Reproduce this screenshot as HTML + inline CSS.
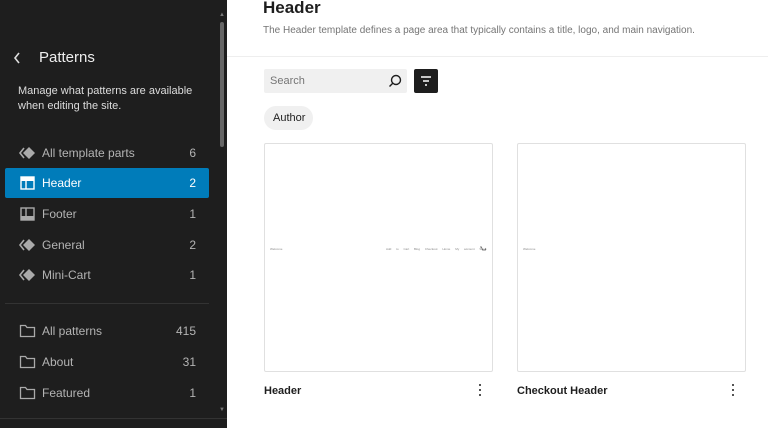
<!DOCTYPE html><html><head><style>
*{margin:0;padding:0;box-sizing:border-box}
body{width:768px;height:428px;overflow:hidden;font-family:"Liberation Sans",sans-serif;background:#fff;position:relative}
.sb{position:absolute;left:0;top:0;width:227px;height:428px;background:#1e1e1e;color:#e0e0e0}
.abs{position:absolute}
.it{position:absolute;left:5px;width:204px;height:30px;font-size:12px;color:#b4b4b4}
.it .l{position:absolute;left:37px;top:8px}
.it .c{position:absolute;right:13px;top:8px}
.it svg{position:absolute;left:13px;top:5px}
.sel{background:#007cba;color:#fff;border-radius:2px}
.main{position:absolute;left:227px;top:0;right:0;height:428px}
.card{position:absolute;top:143px;width:229px;height:229px;border:1px solid #e0e0e0;border-radius:2px}
.lab{position:absolute;top:385px;font-size:11px;font-weight:bold;color:#1e1e1e}
.keb{position:absolute;top:384px;width:3px}
.keb i{display:block;width:2px;height:2px;background:#1e1e1e;margin-bottom:3px;border-radius:1px}
.tiny{position:absolute;font-size:3px;color:#888}
</style></head><body>
<div class="sb">
<div class="abs" style="left:13px;top:51px"><svg width="10" height="14"><path d="M6 2L2 7l4 5" stroke="#ddd" stroke-width="1.6" fill="none"/></svg></div>
<div class="abs" style="left:39px;top:49px;font-size:15px;color:#eee">Patterns</div>
<div class="abs" style="left:18px;top:84px;font-size:11px;line-height:15px;color:#ddd">Manage what patterns are available<br>when editing the site.</div>
<div class="it" style="top:138px"><svg width="20" height="20"><path d="M6 5l-4 5 4 5" stroke="#aaa" stroke-width="1.6" fill="none"/><path d="M11 4l6 6-6 6-6-6z" fill="#aaa"/></svg><span class="l">All template parts</span><span class="c">6</span></div>
<div class="it sel" style="top:168px"><svg width="20" height="20"><rect x="3" y="4" width="13" height="12" fill="none" stroke="#fff" stroke-width="1.4"/><rect x="3" y="4" width="13" height="4" fill="#fff"/><line x1="8" y1="8" x2="8" y2="16" stroke="#fff" stroke-width="1.4"/></svg><span class="l">Header</span><span class="c">2</span></div>
<div class="it" style="top:199px"><svg width="20" height="20"><rect x="3" y="4" width="13" height="12" fill="none" stroke="#aaa" stroke-width="1.4"/><rect x="3" y="12" width="13" height="4" fill="#aaa"/><line x1="8" y1="4" x2="8" y2="12" stroke="#aaa" stroke-width="1.4"/></svg><span class="l">Footer</span><span class="c">1</span></div>
<div class="it" style="top:230px"><svg width="20" height="20"><path d="M6 5l-4 5 4 5" stroke="#aaa" stroke-width="1.6" fill="none"/><path d="M11 4l6 6-6 6-6-6z" fill="#aaa"/></svg><span class="l">General</span><span class="c">2</span></div>
<div class="it" style="top:260px"><svg width="20" height="20"><path d="M6 5l-4 5 4 5" stroke="#aaa" stroke-width="1.6" fill="none"/><path d="M11 4l6 6-6 6-6-6z" fill="#aaa"/></svg><span class="l">Mini-Cart</span><span class="c">1</span></div>
<div class="abs" style="left:5px;top:303px;width:204px;height:1px;background:#333"></div>
<div class="it" style="top:316px"><svg width="20" height="20"><path d="M2.5 4.5h5l1.5 2h7.5v9h-14z" fill="none" stroke="#aaa" stroke-width="1.3"/></svg><span class="l">All patterns</span><span class="c">415</span></div>
<div class="it" style="top:347px"><svg width="20" height="20"><path d="M2.5 4.5h5l1.5 2h7.5v9h-14z" fill="none" stroke="#aaa" stroke-width="1.3"/></svg><span class="l">About</span><span class="c">31</span></div>
<div class="it" style="top:378px"><svg width="20" height="20"><path d="M2.5 4.5h5l1.5 2h7.5v9h-14z" fill="none" stroke="#aaa" stroke-width="1.3"/></svg><span class="l">Featured</span><span class="c">1</span></div>
<div class="abs" style="left:0;top:418px;width:227px;height:10px;background:#1e1e1e;border-top:1px solid #333"></div>
<div class="abs" style="left:220px;top:22px;width:4px;height:125px;background:#666;border-radius:2px"></div>
<div class="abs" style="left:219px;top:12px;font-size:6px;color:#777">▲</div>
<div class="abs" style="left:219px;top:407px;font-size:6px;color:#777">▼</div>
</div>
<div class="main">
<div class="abs" style="left:36px;top:-2px;font-size:17px;font-weight:bold;color:#1e1e1e">Header</div>
<div class="abs" style="left:36px;top:25px;font-size:10px;color:#757575;white-space:nowrap">The Header template defines a page area that typically contains a title, logo, and main navigation.</div>
<div class="abs" style="left:0;top:56px;width:541px;height:1px;background:#eee"></div>
<div class="abs" style="left:37px;top:69px;width:143px;height:24px;background:#f0f0f0;border-radius:2px;font-size:11px;color:#757575;padding:6px 6px">Search</div>
<svg class="abs" style="left:160px;top:73px" width="16" height="16"><circle cx="9" cy="7" r="4.5" fill="none" stroke="#1e1e1e" stroke-width="1.4"/><line x1="6" y1="10" x2="2.5" y2="13.5" stroke="#1e1e1e" stroke-width="1.4"/></svg>
<div class="abs" style="left:187px;top:69px;width:24px;height:24px;background:#1e1e1e;border-radius:2px"><svg width="24" height="24"><path d="M7 8h10M9 12h6M11 16h2" stroke="#fff" stroke-width="1.4"/></svg></div>
<div class="abs" style="left:37px;top:106px;width:49px;height:24px;background:#f0f0f0;border-radius:12px;font-size:11px;color:#1e1e1e;padding:6px 9px">Author</div>
<div class="card" style="left:37px"><span class="tiny" style="left:5px;top:103px">Welcome</span><span class="tiny" style="left:121px;top:103px;word-spacing:4px">Add&nbsp;to&nbsp;Cart Blog Checkout Home My&nbsp;account Shop</span><svg class="abs" style="left:215px;top:102px" width="6" height="6"><path d="M0 1h1.5l1 3h3l.5-2" stroke="#555" stroke-width=".7" fill="none"/></svg></div>
<div class="card" style="left:290px"><span class="tiny" style="left:5px;top:103px">Welcome</span></div>
<div class="lab" style="left:37px">Header</div>
<div class="lab" style="left:290px">Checkout Header</div>
<div class="keb" style="left:252px"><i></i><i></i><i></i></div>
<div class="keb" style="left:505px"><i></i><i></i><i></i></div>
</div>
</body></html>
